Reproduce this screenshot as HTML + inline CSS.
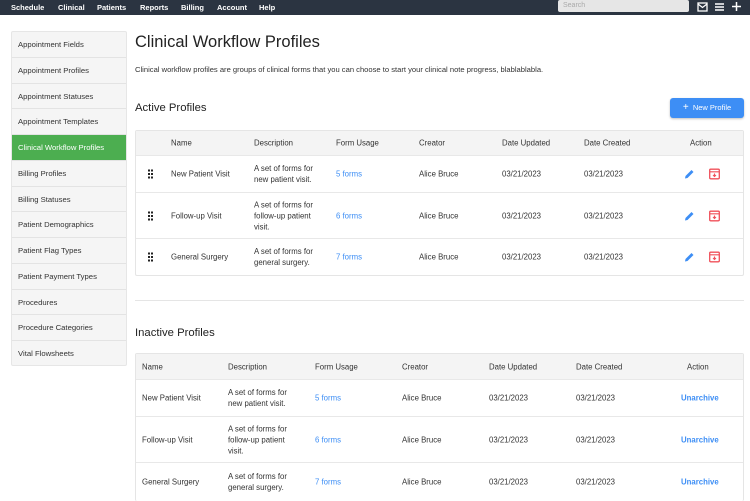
<!DOCTYPE html>
<html><head><meta charset="utf-8"><style>
*{margin:0;padding:0;box-sizing:border-box}
body{width:750px;height:496px;overflow:hidden;background:#fff;font-family:"Liberation Sans",sans-serif;color:#333;position:relative}
.nav{position:absolute;left:0;top:0;width:750px;height:15px;background:#2b3441;color:#fff;font-size:7.5px;font-weight:bold}
.nav span{position:absolute;top:3px}
.search{position:absolute;left:558px;top:0;width:131px;height:12px;background:#e6e6e6;border-radius:2px;color:#aaa;font-size:7px;font-weight:normal;padding:2px 5px}
.side{position:absolute;left:11px;top:31px;width:116px;height:335px;background:#f5f5f5;border:1px solid #e6e6e6;border-radius:2px}
.side div{height:25.77px;border-bottom:1px solid #e3e3e3;font-size:7.7px;padding-left:6px;line-height:25px;color:#333}
.side div.act{background:#4cae50;color:#fff}
.side div:last-child{border-bottom:none}
.abs{position:absolute}
h1{position:absolute;left:135px;top:33px;font-size:16.5px;font-weight:normal;color:#222}
.desc{position:absolute;left:135px;top:65px;font-size:7.6px;color:#333}
h2{position:absolute;font-size:11.3px;font-weight:normal;color:#222}
.btn{position:absolute;left:670px;top:98px;width:74px;height:20px;background:#3d8ef5;border-radius:3px;color:#fff;font-size:7.5px;line-height:20px;text-align:center;box-shadow:0 1px 2px rgba(0,0,0,.25)}
.tbl{position:absolute;left:135px;width:609px;border:1px solid #e5e5e5;border-radius:2px;background:#fff}
.row{position:relative;border-bottom:1px solid #e8e8e8;font-size:7.8px}
.row:last-child{border-bottom:none}
.hd{background:#f4f4f4;color:#333}
.c{position:absolute;top:50%;transform:translateY(-50%);line-height:11px}
.lk{color:#3d8ef5}
</style></head><body>
<div class="nav">
<span style="left:11px">Schedule</span><span style="left:58px">Clinical</span><span style="left:97px">Patients</span><span style="left:140px">Reports</span><span style="left:181px">Billing</span><span style="left:217px">Account</span><span style="left:259px">Help</span>
<div class="search">Search</div>
<svg class="abs" style="left:697px;top:2px" width="11" height="10" viewBox="0 0 11 10"><rect x="1" y="1" width="9" height="8" fill="none" stroke="#fff" stroke-width="1.3"/><path d="M1 2l4.5 3.5L10 2" fill="none" stroke="#fff" stroke-width="1.2"/></svg>
<svg class="abs" style="left:714px;top:2px" width="11" height="10"><path d="M1 2h9M1 5h9M1 8h9" stroke="#fff" stroke-width="1.4"/></svg>
<svg class="abs" style="left:731px;top:1px" width="11" height="11"><path d="M5.5 1v9M1 5.5h9" stroke="#fff" stroke-width="1.5"/></svg>
</div>
<div class="side">
<div>Appointment Fields</div><div>Appointment Profiles</div><div>Appointment Statuses</div><div>Appointment Templates</div><div class="act">Clinical Workflow Profiles</div><div>Billing Profiles</div><div>Billing Statuses</div><div>Patient Demographics</div><div>Patient Flag Types</div><div>Patient Payment Types</div><div>Procedures</div><div>Procedure Categories</div><div>Vital Flowsheets</div>
</div>
<h1>Clinical Workflow Profiles</h1>
<div class="desc">Clinical workflow profiles are groups of clinical forms that you can choose to start your clinical note progress, blablablabla.</div>
<h2 style="left:135px;top:102px">Active Profiles</h2>
<div class="btn"><b style="font-size:10px;font-weight:normal">+</b>&nbsp; New Profile</div>
<div class="tbl" style="top:130px">
 <div class="row hd" style="height:25px"><span class="c" style="left:35px">Name</span><span class="c" style="left:118px">Description</span><span class="c" style="left:200px">Form Usage</span><span class="c" style="left:283px">Creator</span><span class="c" style="left:366px">Date Updated</span><span class="c" style="left:448px">Date Created</span><span class="c" style="left:554px">Action</span></div>
 <div class="row" style="height:37px"><svg class="c" style="left:12px" width="5" height="9"><g fill="#222"><rect x="0" y="0" width="2" height="2"/><rect x="3" y="0" width="2" height="2"/><rect x="0" y="3.5" width="2" height="2"/><rect x="3" y="3.5" width="2" height="2"/><rect x="0" y="7" width="2" height="2"/><rect x="3" y="7" width="2" height="2"/></g></svg><span class="c" style="left:35px">New Patient Visit</span><span class="c" style="left:118px">A set of forms for<br>new patient visit.</span><span class="c lk" style="left:200px">5 forms</span><span class="c" style="left:283px">Alice Bruce</span><span class="c" style="left:366px">03/21/2023</span><span class="c" style="left:448px">03/21/2023</span>
 <svg class="c" style="left:548px" width="11" height="11"><path d="M1 10L1.5 7.5 7.5 1.5 9.5 3.5 3.5 9.5z" fill="#3d8ef5"/></svg><svg class="c" style="left:573px" width="11" height="11"><rect x="0.7" y="0.7" width="9.6" height="9.6" rx="1" fill="none" stroke="#f0505a" stroke-width="1.3"/><path d="M1 3.3h9M5.5 5v3M4 6.5l1.5 1.5L7 6.5" stroke="#f0505a" stroke-width="1.1" fill="none"/></svg></div>
 <div class="row" style="height:46px"><svg class="c" style="left:12px" width="5" height="9"><g fill="#222"><rect x="0" y="0" width="2" height="2"/><rect x="3" y="0" width="2" height="2"/><rect x="0" y="3.5" width="2" height="2"/><rect x="3" y="3.5" width="2" height="2"/><rect x="0" y="7" width="2" height="2"/><rect x="3" y="7" width="2" height="2"/></g></svg><span class="c" style="left:35px">Follow-up Visit</span><span class="c" style="left:118px">A set of forms for<br>follow-up patient<br>visit.</span><span class="c lk" style="left:200px">6 forms</span><span class="c" style="left:283px">Alice Bruce</span><span class="c" style="left:366px">03/21/2023</span><span class="c" style="left:448px">03/21/2023</span>
 <svg class="c" style="left:548px" width="11" height="11"><path d="M1 10L1.5 7.5 7.5 1.5 9.5 3.5 3.5 9.5z" fill="#3d8ef5"/></svg><svg class="c" style="left:573px" width="11" height="11"><rect x="0.7" y="0.7" width="9.6" height="9.6" rx="1" fill="none" stroke="#f0505a" stroke-width="1.3"/><path d="M1 3.3h9M5.5 5v3M4 6.5l1.5 1.5L7 6.5" stroke="#f0505a" stroke-width="1.1" fill="none"/></svg></div>
 <div class="row" style="height:36px"><svg class="c" style="left:12px" width="5" height="9"><g fill="#222"><rect x="0" y="0" width="2" height="2"/><rect x="3" y="0" width="2" height="2"/><rect x="0" y="3.5" width="2" height="2"/><rect x="3" y="3.5" width="2" height="2"/><rect x="0" y="7" width="2" height="2"/><rect x="3" y="7" width="2" height="2"/></g></svg><span class="c" style="left:35px">General Surgery</span><span class="c" style="left:118px">A set of forms for<br>general surgery.</span><span class="c lk" style="left:200px">7 forms</span><span class="c" style="left:283px">Alice Bruce</span><span class="c" style="left:366px">03/21/2023</span><span class="c" style="left:448px">03/21/2023</span>
 <svg class="c" style="left:548px" width="11" height="11"><path d="M1 10L1.5 7.5 7.5 1.5 9.5 3.5 3.5 9.5z" fill="#3d8ef5"/></svg><svg class="c" style="left:573px" width="11" height="11"><rect x="0.7" y="0.7" width="9.6" height="9.6" rx="1" fill="none" stroke="#f0505a" stroke-width="1.3"/><path d="M1 3.3h9M5.5 5v3M4 6.5l1.5 1.5L7 6.5" stroke="#f0505a" stroke-width="1.1" fill="none"/></svg></div>
</div>
<div class="abs" style="left:135px;top:300px;width:609px;height:1px;background:#e5e5e5"></div>
<h2 style="left:135px;top:327px">Inactive Profiles</h2>
<div class="tbl" style="top:353px;border-bottom:none">
 <div class="row hd" style="height:26px"><span class="c" style="left:6px">Name</span><span class="c" style="left:92px">Description</span><span class="c" style="left:179px">Form Usage</span><span class="c" style="left:266px">Creator</span><span class="c" style="left:353px">Date Updated</span><span class="c" style="left:440px">Date Created</span><span class="c" style="left:551px">Action</span></div>
 <div class="row" style="height:37px"><span class="c" style="left:6px">New Patient Visit</span><span class="c" style="left:92px">A set of forms for<br>new patient visit.</span><span class="c lk" style="left:179px">5 forms</span><span class="c" style="left:266px">Alice Bruce</span><span class="c" style="left:353px">03/21/2023</span><span class="c" style="left:440px">03/21/2023</span><span class="c lk" style="left:545px;font-weight:bold">Unarchive</span></div>
 <div class="row" style="height:46px"><span class="c" style="left:6px">Follow-up Visit</span><span class="c" style="left:92px">A set of forms for<br>follow-up patient<br>visit.</span><span class="c lk" style="left:179px">6 forms</span><span class="c" style="left:266px">Alice Bruce</span><span class="c" style="left:353px">03/21/2023</span><span class="c" style="left:440px">03/21/2023</span><span class="c lk" style="left:545px;font-weight:bold">Unarchive</span></div>
 <div class="row" style="height:38px;border-bottom:none"><span class="c" style="left:6px">General Surgery</span><span class="c" style="left:92px">A set of forms for<br>general surgery.</span><span class="c lk" style="left:179px">7 forms</span><span class="c" style="left:266px">Alice Bruce</span><span class="c" style="left:353px">03/21/2023</span><span class="c" style="left:440px">03/21/2023</span><span class="c lk" style="left:545px;font-weight:bold">Unarchive</span></div>
</div>
</body></html>
